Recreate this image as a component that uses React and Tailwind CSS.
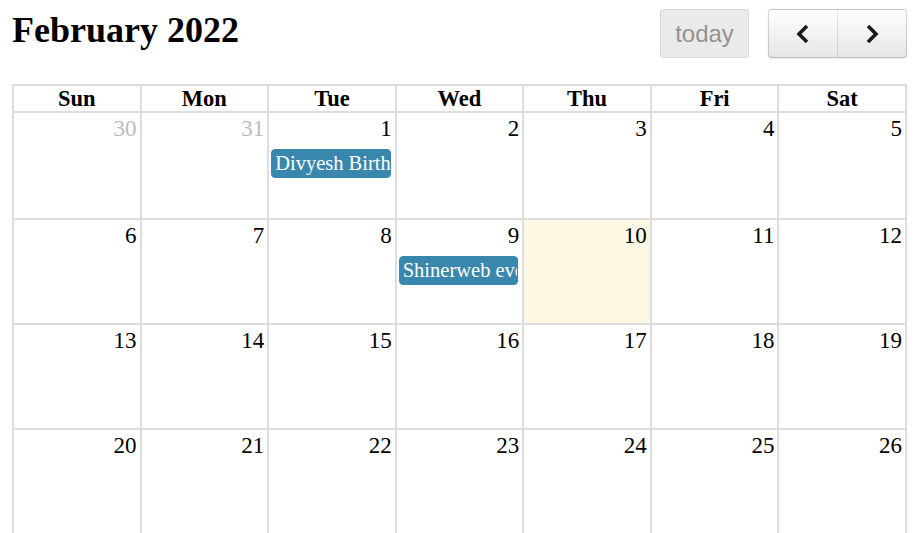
import React from "react";

const days = ["Sun", "Mon", "Tue", "Wed", "Thu", "Fri", "Sat"];

const weeks = [
  [30, 31, 1, 2, 3, 4, 5],
  [6, 7, 8, 9, 10, 11, 12],
  [13, 14, 15, 16, 17, 18, 19],
  [20, 21, 22, 23, 24, 25, 26],
];

const events = {
  "0-2": "Divyesh Birthday",
  "1-3": "Shinerweb event",
};

function Chevron({ dir }) {
  return (
    <svg width="18" height="20" viewBox="0 0 18 20" fill="none">
      <path
        d={dir === "left" ? "M13 2 L5 10 L13 18" : "M5 2 L13 10 L5 18"}
        stroke="#1a1a1a"
        strokeWidth="3.6"
        strokeLinecap="butt"
        strokeLinejoin="miter"
      />
    </svg>
  );
}

export default function App() {
  return (
    <div className="w-[917px] h-[533px] overflow-hidden bg-white pt-[9px] pl-[12px] pr-[10px] font-['Liberation_Serif',serif] text-black">
      {/* Toolbar */}
      <div className="flex items-start justify-between h-[75px]">
        <h2 className="text-[36px] font-bold leading-[41px] mt-[1px]">February 2022</h2>
        <div className="flex gap-[19px] font-['Liberation_Sans',sans-serif]">
          <button className="w-[89px] h-[49px] rounded-[4px] border border-black/10 bg-[#e6e6e6] text-[24px] text-[#777] opacity-80">
            today
          </button>
          <div className="flex rounded-[4px] border border-black/15 border-b-black/25 shadow-[0_1px_2px_rgba(0,0,0,0.08)] bg-gradient-to-b from-white to-[#e6e6e6] overflow-hidden">
            <button className="w-[69px] h-[47px] flex items-center justify-center border-r border-black/10">
              <Chevron dir="left" />
            </button>
            <button className="w-[68px] h-[47px] flex items-center justify-center">
              <Chevron dir="right" />
            </button>
          </div>
        </div>
      </div>

      {/* Calendar grid */}
      <div className="w-[895px] border-r-2 border-[#ddd]">
        <div className="grid grid-cols-7">
          {days.map((d) => (
            <div
              key={d}
              className="h-[27px] border-l-2 border-t-2 border-[#ddd] text-center text-[22.5px] font-bold leading-[25px]"
            >
              {d}
            </div>
          ))}
        </div>
        {weeks.map((w, wi) => (
          <div key={wi} className={`grid grid-cols-7 ${wi === 0 ? "h-[107px]" : "h-[105px]"}`}>
            {w.map((n, di) => {
              const other = wi === 0 && n > 20;
              const today = wi === 1 && n === 10;
              const ev = events[`${wi}-${di}`];
              return (
                <div
                  key={di}
                  className={`border-l-2 border-t-2 border-[#ddd] pt-[3px] ${
                    today ? "bg-[#fcf8e3]" : "bg-white"
                  }`}
                >
                  <div
                    className={`text-right pr-[3px] text-[23px] leading-[26px] ${
                      other ? "text-[#bbb]" : "text-black"
                    }`}
                  >
                    {n}
                  </div>
                  {ev && (
                    <div className="mt-[7px] ml-[2px] mr-[4px] h-[29px] overflow-hidden whitespace-nowrap rounded-[4px] border border-[#3a87ad] bg-[#3a87ad] px-[3px] text-[20.5px] leading-[27px] text-white">
                      {ev}
                    </div>
                  )}
                </div>
              );
            })}
          </div>
        ))}
      </div>
    </div>
  );
}
